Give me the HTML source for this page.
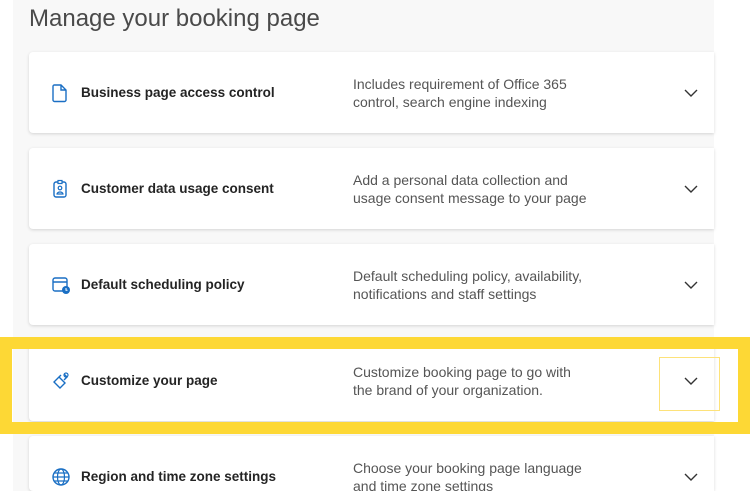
<!DOCTYPE html>
<html><head><style>
html,body{margin:0;width:750px;height:491px;overflow:hidden;background:#fff;font-family:"Liberation Sans",sans-serif;position:relative}
.panel{position:absolute;left:13px;top:0;width:701px;height:491px;background:#f8f8f8}
h1{position:absolute;left:29px;top:5px;margin:0;font-size:24px;font-weight:normal;color:#4a4a4a}
.card{position:absolute;left:29px;width:685px;height:81px;background:#fff;border-radius:4px 0 0 4px;box-shadow:0 1px 3px rgba(0,0,0,.15);overflow:hidden}
.card svg.ic{position:absolute;left:22px;top:31px}
.t{position:absolute;left:52px;top:33px;font-size:13.5px;font-weight:bold;color:#242424;white-space:nowrap}
.d{position:absolute;left:324px;top:23px;font-size:14px;line-height:18px;color:#555;width:240px}
.ch{position:absolute;left:655px;top:36px}
.y{position:absolute;border:12px solid #fdd835}
</style></head><body>
<div class="panel"></div>
<h1>Manage your booking page</h1>
<div class="card" style="top:52px"><svg class="ic" width="18" height="20" viewBox="0 0 18 20"><path d="M3 2h7l5 5v10a1.5 1.5 0 0 1-1.5 1.5h-10A1.5 1.5 0 0 1 2 17V3.5A1.5 1.5 0 0 1 3 2z M10 2v5h5" fill="none" stroke="#1a6fc4" stroke-width="1.4"/></svg><div class="t">Business page access control</div><div class="d">Includes requirement of Office 365 control, search engine indexing</div><svg class="ch" width="14" height="10"><path d="M1 2l6 6 6-6" fill="none" stroke="#333" stroke-width="1.4"/></svg></div>
<div class="card" style="top:148px"><svg class="ic" width="18" height="20" viewBox="0 0 18 20"><rect x="3" y="3" width="12" height="15" rx="2" fill="none" stroke="#1a6fc4" stroke-width="1.4"/><rect x="7" y="1.5" width="4" height="3" fill="#fff" stroke="#1a6fc4" stroke-width="1.2"/><circle cx="9" cy="9" r="1.8" fill="none" stroke="#1a6fc4" stroke-width="1.2"/><path d="M6 15a3 2 0 0 1 6 0z" fill="none" stroke="#1a6fc4" stroke-width="1.2"/></svg><div class="t">Customer data usage consent</div><div class="d">Add a personal data collection and usage consent message to your page</div><svg class="ch" width="14" height="10"><path d="M1 2l6 6 6-6" fill="none" stroke="#333" stroke-width="1.4"/></svg></div>
<div class="card" style="top:244px"><svg class="ic" width="20" height="20" viewBox="0 0 20 20"><rect x="2" y="3" width="14" height="13" rx="2" fill="none" stroke="#1a6fc4" stroke-width="1.4"/><path d="M2 7h14" stroke="#1a6fc4" stroke-width="1.4"/><circle cx="15" cy="15" r="4" fill="#1a6fc4"/><path d="M15 13v2.3h1.5" stroke="#fff" stroke-width="1" fill="none"/></svg><div class="t">Default scheduling policy</div><div class="d">Default scheduling policy, availability, notifications and staff settings</div><svg class="ch" width="14" height="10"><path d="M1 2l6 6 6-6" fill="none" stroke="#333" stroke-width="1.4"/></svg></div>
<div class="card" style="top:340px"><svg class="ic" width="20" height="20" viewBox="0 0 20 20"><path d="M3 11l5-5 6 6-5 5z M8 6l2-2 M13 3l3 3-3 3" fill="none" stroke="#1a6fc4" stroke-width="1.4"/><circle cx="15" cy="4" r="2" fill="none" stroke="#1a6fc4" stroke-width="1.2"/></svg><div class="t">Customize your page</div><div class="d" style="width:225px">Customize booking page to go with the brand of your organization.</div><svg class="ch" width="14" height="10"><path d="M1 2l6 6 6-6" fill="none" stroke="#333" stroke-width="1.4"/></svg></div>
<div class="card" style="top:436px;height:55px"><svg class="ic" width="20" height="20" viewBox="0 0 20 20"><circle cx="10" cy="10" r="8" fill="none" stroke="#1a6fc4" stroke-width="1.4"/><ellipse cx="10" cy="10" rx="3.5" ry="8" fill="none" stroke="#1a6fc4" stroke-width="1.2"/><path d="M2 10h16M3.5 6h13M3.5 14h13" stroke="#1a6fc4" stroke-width="1.2"/></svg><div class="t">Region and time zone settings</div><div class="d">Choose your booking page language and time zone settings</div><svg class="ch" width="14" height="10"><path d="M1 2l6 6 6-6" fill="none" stroke="#333" stroke-width="1.4"/></svg></div>
<div class="y" style="left:0;top:337px;width:726px;height:73px"></div>
<div style="position:absolute;left:659px;top:357px;width:59px;height:52px;border:1.5px solid #fde27a"></div>
</body></html>
